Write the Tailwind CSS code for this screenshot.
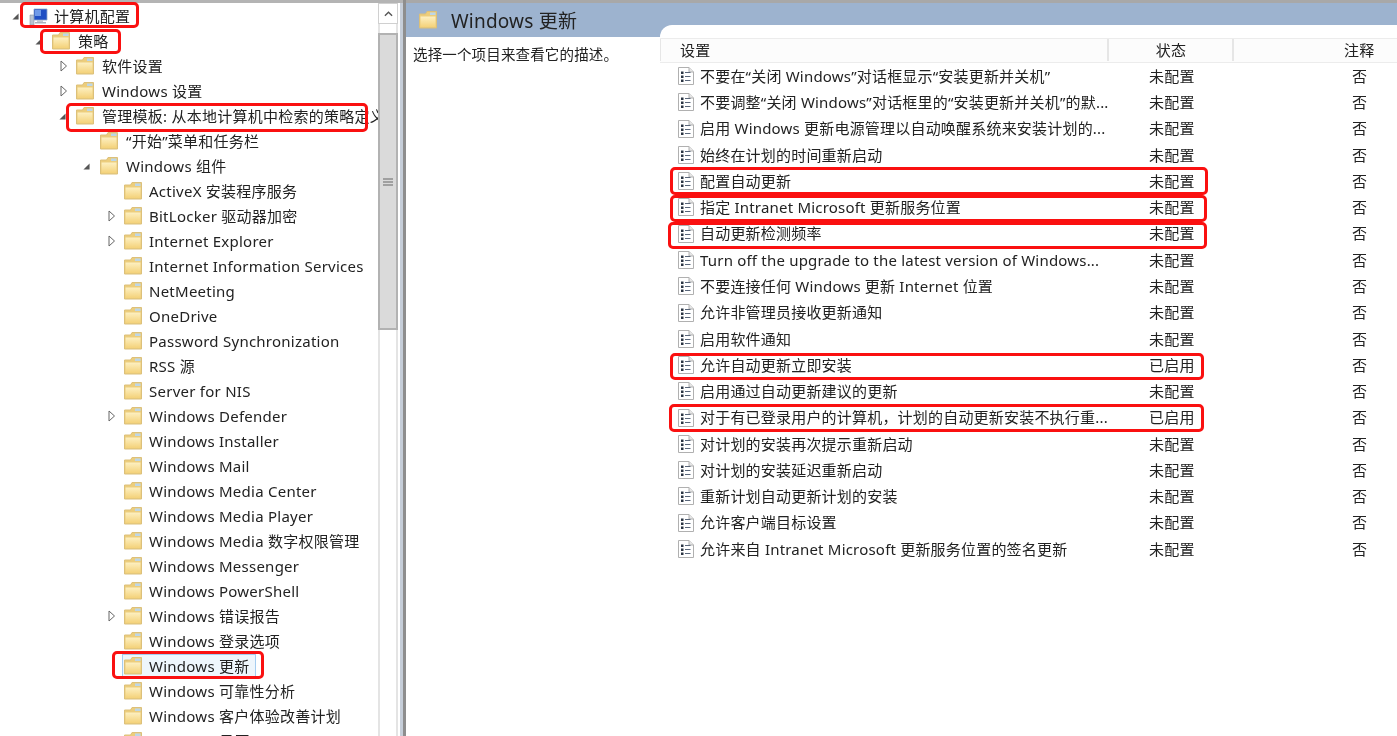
<!DOCTYPE html>
<html lang="zh-CN">
<head>
<meta charset="utf-8">
<script src="https://cdn.jsdelivr.net/npm/@tailwindcss/browser@4"></script>
<title>本地组策略编辑器</title>
</head>
<body class="m-0 bg-white">
<svg width="0" height="0" class="absolute">
  <defs>
    <linearGradient id="fg" x1="0" y1="0" x2="0" y2="1"><stop offset="0" stop-color="#fdf0c2"/><stop offset="1" stop-color="#f4d27a"/></linearGradient>
    <symbol id="folder" viewBox="0 0 18 18">
      <path d="M.5 17V3h6l1.500-2.500h9.500V17z" fill="#eccd7c" stroke="#dcc07a" stroke-width="1"/>
      <path d="M1.500 16V5.500h15V16z" fill="url(#fg)"/>
      <path d="M11 1.500h5.500v2.500H11z" fill="#bcd6e8"/>
    </symbol>
    <symbol id="doc" viewBox="0 0 16 18">
      <path d="M.5.500h10.500l4.500 4.500v12.500H.5z" fill="#fff" stroke="#b0b0b0"/>
      <path d="M11 .5v4.500h4.500" fill="#e6e6e6" stroke="#b0b0b0"/>
      <path d="M3 4.500h2.500v2.500H3zM3 8.500h2.500V11H3zM3 12.500h2.500V15H3z" fill="#2a3442"/>
      <path d="M7 5.500h5.500M7 9.500h5.500M7 13.500h5.500" stroke="#59667a"/>
    </symbol>
    <symbol id="open" viewBox="0 0 8 8"><path d="M7.500.5v7H.5z" fill="#555"/></symbol>
    <symbol id="closed" viewBox="0 0 8 12"><path d="M1 1l5.500 5L1 11z" fill="#fff" stroke="#666"/></symbol>
  </defs>
</svg>
<div class="relative w-[1397px] h-[736px] overflow-hidden flex bg-white text-[#222] blur-[0.35px] font-['Noto_Sans','Noto_Sans_CJK_SC',sans-serif]">
  <!-- left tree -->
  <div class="w-[400px] h-full flex border-t-[3px] border-[#b4b4b4] shrink-0">
    <div class="w-[378px] pt-[0.5px] overflow-hidden text-[15px] tracking-[0.25px] leading-[25px] whitespace-nowrap [&_svg]:shrink-0">
      <div class="h-[25px] flex items-center pl-[12px]"><svg class="w-[7px] h-[7px] mr-[9px]"><use href="#open"/></svg>
        <svg viewBox="0 0 20 20" class="w-[20px] h-[20px] mr-[6px]"><path d="M2 9h4v10H2z" fill="#b8c4d2" stroke="#8b97a6" stroke-width=".6"/><path d="M6 3h13v11H6z" fill="#1f4fc4" stroke="#8fa8cc" stroke-width=".8"/><path d="M7 4h6v6H7z" fill="#6f9ae8"/><path d="M9 14h6v2H9z" fill="#c2cad4"/><path d="M7 16h11v1.500H7z" fill="#a9b3bf"/></svg>计算机配置</div>
      <div class="h-[25px] flex items-center pl-[35px]"><svg class="w-[7px] h-[7px] mr-[10px]"><use href="#open"/></svg><svg class="w-[18px] h-[18px] mr-[8px]"><use href="#folder"/></svg>策略</div>
      <div class="h-[25px] flex items-center pl-[60px]"><svg class="w-[8px] h-[12px] mr-[8px]"><use href="#closed"/></svg><svg class="w-[18px] h-[18px] mr-[8px]"><use href="#folder"/></svg>软件设置</div>
      <div class="h-[25px] flex items-center pl-[60px]"><svg class="w-[8px] h-[12px] mr-[8px]"><use href="#closed"/></svg><svg class="w-[18px] h-[18px] mr-[8px]"><use href="#folder"/></svg>Windows 设置</div>
      <div class="h-[25px] flex items-center pl-[59px]"><svg class="w-[7px] h-[7px] mr-[10px]"><use href="#open"/></svg><svg class="w-[18px] h-[18px] mr-[8px]"><use href="#folder"/></svg>管理模板: 从本地计算机中检索的策略定义</div>
      <div class="h-[25px] flex items-center pl-[100px]"><svg class="w-[18px] h-[18px] mr-[8px]"><use href="#folder"/></svg>“开始”菜单和任务栏</div>
      <div class="h-[25px] flex items-center pl-[83px]"><svg class="w-[7px] h-[7px] mr-[10px]"><use href="#open"/></svg><svg class="w-[18px] h-[18px] mr-[8px]"><use href="#folder"/></svg>Windows 组件</div>
      <div class="h-[25px] flex items-center pl-[124px]"><svg class="w-[18px] h-[18px] mr-[7px]"><use href="#folder"/></svg>ActiveX 安装程序服务</div>
      <div class="h-[25px] flex items-center pl-[108px]"><svg class="w-[8px] h-[12px] mr-[8px]"><use href="#closed"/></svg><svg class="w-[18px] h-[18px] mr-[7px]"><use href="#folder"/></svg>BitLocker 驱动器加密</div>
      <div class="h-[25px] flex items-center pl-[108px]"><svg class="w-[8px] h-[12px] mr-[8px]"><use href="#closed"/></svg><svg class="w-[18px] h-[18px] mr-[7px]"><use href="#folder"/></svg>Internet Explorer</div>
      <div class="h-[25px] flex items-center pl-[124px]"><svg class="w-[18px] h-[18px] mr-[7px]"><use href="#folder"/></svg>Internet Information Services</div>
      <div class="h-[25px] flex items-center pl-[124px]"><svg class="w-[18px] h-[18px] mr-[7px]"><use href="#folder"/></svg>NetMeeting</div>
      <div class="h-[25px] flex items-center pl-[124px]"><svg class="w-[18px] h-[18px] mr-[7px]"><use href="#folder"/></svg>OneDrive</div>
      <div class="h-[25px] flex items-center pl-[124px]"><svg class="w-[18px] h-[18px] mr-[7px]"><use href="#folder"/></svg>Password Synchronization</div>
      <div class="h-[25px] flex items-center pl-[124px]"><svg class="w-[18px] h-[18px] mr-[7px]"><use href="#folder"/></svg>RSS 源</div>
      <div class="h-[25px] flex items-center pl-[124px]"><svg class="w-[18px] h-[18px] mr-[7px]"><use href="#folder"/></svg>Server for NIS</div>
      <div class="h-[25px] flex items-center pl-[108px]"><svg class="w-[8px] h-[12px] mr-[8px]"><use href="#closed"/></svg><svg class="w-[18px] h-[18px] mr-[7px]"><use href="#folder"/></svg>Windows Defender</div>
      <div class="h-[25px] flex items-center pl-[124px]"><svg class="w-[18px] h-[18px] mr-[7px]"><use href="#folder"/></svg>Windows Installer</div>
      <div class="h-[25px] flex items-center pl-[124px]"><svg class="w-[18px] h-[18px] mr-[7px]"><use href="#folder"/></svg>Windows Mail</div>
      <div class="h-[25px] flex items-center pl-[124px]"><svg class="w-[18px] h-[18px] mr-[7px]"><use href="#folder"/></svg>Windows Media Center</div>
      <div class="h-[25px] flex items-center pl-[124px]"><svg class="w-[18px] h-[18px] mr-[7px]"><use href="#folder"/></svg>Windows Media Player</div>
      <div class="h-[25px] flex items-center pl-[124px]"><svg class="w-[18px] h-[18px] mr-[7px]"><use href="#folder"/></svg>Windows Media 数字权限管理</div>
      <div class="h-[25px] flex items-center pl-[124px]"><svg class="w-[18px] h-[18px] mr-[7px]"><use href="#folder"/></svg>Windows Messenger</div>
      <div class="h-[25px] flex items-center pl-[124px]"><svg class="w-[18px] h-[18px] mr-[7px]"><use href="#folder"/></svg>Windows PowerShell</div>
      <div class="h-[25px] flex items-center pl-[108px]"><svg class="w-[8px] h-[12px] mr-[8px]"><use href="#closed"/></svg><svg class="w-[18px] h-[18px] mr-[7px]"><use href="#folder"/></svg>Windows 错误报告</div>
      <div class="h-[25px] flex items-center pl-[124px]"><svg class="w-[18px] h-[18px] mr-[7px]"><use href="#folder"/></svg>Windows 登录选项</div>
      <div class="h-[25px] flex items-center pl-[122px]"><span class="border border-[#a5cdf0] bg-[#eef6fc] pl-[1px] pr-[6px] h-[24px] flex items-center"><svg class="w-[18px] h-[18px] mr-[7px]"><use href="#folder"/></svg>Windows 更新</span></div>
      <div class="h-[25px] flex items-center pl-[124px]"><svg class="w-[18px] h-[18px] mr-[7px]"><use href="#folder"/></svg>Windows 可靠性分析</div>
      <div class="h-[25px] flex items-center pl-[124px]"><svg class="w-[18px] h-[18px] mr-[7px]"><use href="#folder"/></svg>Windows 客户体验改善计划</div>
      <div class="h-[25px] flex items-center pl-[124px]"><svg class="w-[18px] h-[18px] mr-[7px]"><use href="#folder"/></svg>Windows 日历</div>
    </div>
    <!-- scrollbar -->
    <div class="w-[20px] h-full flex flex-col border-x-2 border-[#e4e4e4]">
      <div class="h-[21px] bg-white border border-[#d0d0d0] -mx-[2px] flex items-center justify-center shrink-0">
        <svg viewBox="0 0 10 6" class="w-[9px] h-[6px]"><path d="M1 5l4-4 4 4" fill="none" stroke="#555" stroke-width="1.500"/></svg>
      </div>
      <div class="h-[9px] bg-white shrink-0"></div>
      <div class="h-[297px] bg-[#dadada] border-2 border-[#b2b2b2] -mx-[2px] flex items-center justify-center shrink-0">
        <svg viewBox="0 0 10 8" class="w-[10px] h-[8px]"><path d="M0 1h10M0 4h10M0 7h10" stroke="#666"/></svg>
      </div>
    </div>
  </div>
  <!-- splitter -->
  <div class="w-[3px] h-full bg-[#c6ced9] shrink-0 border-t-[3px] border-[#b4b4b4]"></div>
  <div class="w-[3px] h-full bg-[#8e8e8e] shrink-0"></div>
  <!-- right pane -->
  <div class="flex-1 min-w-0 h-full flex flex-col border-t-[3px] border-[#a8a8a8]">
    <div class="h-[34px] bg-[#9db3cf] flex items-center pl-[13px] shrink-0">
      <svg class="w-[18px] h-[18px] mr-[14px]"><use href="#folder"/></svg>
      <span class="text-[19px] tracking-[0.2px] mt-[3px]">Windows 更新</span>
    </div>
    <div class="flex flex-1 min-h-0">
      <div class="w-[254px] shrink-0 pl-[7px] pt-[6px] text-[14.500px] tracking-[0.15px] leading-[22px]">选择一个项目来查看它的描述。</div>
      <div class="relative flex-1 min-w-0 bg-white -mt-[12px] rounded-tl-[12px] text-[15px] tracking-[0.2px] whitespace-nowrap">
        <div class="h-[13px]"></div>
        <div class="h-[25px] pb-[1px] flex text-[#222] border-y border-[#ececec] bg-[#fcfcfc]">
          <div class="w-[449px] pl-[19px] flex items-center border-r-[2px] border-[#e6e6e6] border-l-[1px]">设置</div>
          <div class="w-[125px] pl-[1px] flex items-center justify-center border-r-[2px] border-[#e6e6e6]">状态</div>
          <div class="flex-1 flex items-center pl-[110px]">注释</div>
        </div>
        <div class="[&>div]:h-[26.280px]">
          <div class="flex items-center pl-[18px]"><svg class="w-[16px] h-[18px] mr-[6px] shrink-0"><use href="#doc"/></svg><span class="w-[449px]">不要在“关闭 Windows”对话框显示“安装更新并关机”</span><span class="w-[203px]">未配置</span><span>否</span></div>
          <div class="flex items-center pl-[18px]"><svg class="w-[16px] h-[18px] mr-[6px] shrink-0"><use href="#doc"/></svg><span class="w-[449px]">不要调整“关闭 Windows”对话框里的“安装更新并关机”的默...</span><span class="w-[203px]">未配置</span><span>否</span></div>
          <div class="flex items-center pl-[18px]"><svg class="w-[16px] h-[18px] mr-[6px] shrink-0"><use href="#doc"/></svg><span class="w-[449px]">启用 Windows 更新电源管理以自动唤醒系统来安装计划的...</span><span class="w-[203px]">未配置</span><span>否</span></div>
          <div class="flex items-center pl-[18px]"><svg class="w-[16px] h-[18px] mr-[6px] shrink-0"><use href="#doc"/></svg><span class="w-[449px]">始终在计划的时间重新启动</span><span class="w-[203px]">未配置</span><span>否</span></div>
          <div class="flex items-center pl-[18px]"><svg class="w-[16px] h-[18px] mr-[6px] shrink-0"><use href="#doc"/></svg><span class="w-[449px]">配置自动更新</span><span class="w-[203px]">未配置</span><span>否</span></div>
          <div class="flex items-center pl-[18px]"><svg class="w-[16px] h-[18px] mr-[6px] shrink-0"><use href="#doc"/></svg><span class="w-[449px]">指定 Intranet Microsoft 更新服务位置</span><span class="w-[203px]">未配置</span><span>否</span></div>
          <div class="flex items-center pl-[18px]"><svg class="w-[16px] h-[18px] mr-[6px] shrink-0"><use href="#doc"/></svg><span class="w-[449px]">自动更新检测频率</span><span class="w-[203px]">未配置</span><span>否</span></div>
          <div class="flex items-center pl-[18px]"><svg class="w-[16px] h-[18px] mr-[6px] shrink-0"><use href="#doc"/></svg><span class="w-[449px]">Turn off the upgrade to the latest version of Windows...</span><span class="w-[203px]">未配置</span><span>否</span></div>
          <div class="flex items-center pl-[18px]"><svg class="w-[16px] h-[18px] mr-[6px] shrink-0"><use href="#doc"/></svg><span class="w-[449px]">不要连接任何 Windows 更新 Internet 位置</span><span class="w-[203px]">未配置</span><span>否</span></div>
          <div class="flex items-center pl-[18px]"><svg class="w-[16px] h-[18px] mr-[6px] shrink-0"><use href="#doc"/></svg><span class="w-[449px]">允许非管理员接收更新通知</span><span class="w-[203px]">未配置</span><span>否</span></div>
          <div class="flex items-center pl-[18px]"><svg class="w-[16px] h-[18px] mr-[6px] shrink-0"><use href="#doc"/></svg><span class="w-[449px]">启用软件通知</span><span class="w-[203px]">未配置</span><span>否</span></div>
          <div class="flex items-center pl-[18px]"><svg class="w-[16px] h-[18px] mr-[6px] shrink-0"><use href="#doc"/></svg><span class="w-[449px]">允许自动更新立即安装</span><span class="w-[203px]">已启用</span><span>否</span></div>
          <div class="flex items-center pl-[18px]"><svg class="w-[16px] h-[18px] mr-[6px] shrink-0"><use href="#doc"/></svg><span class="w-[449px]">启用通过自动更新建议的更新</span><span class="w-[203px]">未配置</span><span>否</span></div>
          <div class="flex items-center pl-[18px]"><svg class="w-[16px] h-[18px] mr-[6px] shrink-0"><use href="#doc"/></svg><span class="w-[449px]">对于有已登录用户的计算机，计划的自动更新安装不执行重...</span><span class="w-[203px]">已启用</span><span>否</span></div>
          <div class="flex items-center pl-[18px]"><svg class="w-[16px] h-[18px] mr-[6px] shrink-0"><use href="#doc"/></svg><span class="w-[449px]">对计划的安装再次提示重新启动</span><span class="w-[203px]">未配置</span><span>否</span></div>
          <div class="flex items-center pl-[18px]"><svg class="w-[16px] h-[18px] mr-[6px] shrink-0"><use href="#doc"/></svg><span class="w-[449px]">对计划的安装延迟重新启动</span><span class="w-[203px]">未配置</span><span>否</span></div>
          <div class="flex items-center pl-[18px]"><svg class="w-[16px] h-[18px] mr-[6px] shrink-0"><use href="#doc"/></svg><span class="w-[449px]">重新计划自动更新计划的安装</span><span class="w-[203px]">未配置</span><span>否</span></div>
          <div class="flex items-center pl-[18px]"><svg class="w-[16px] h-[18px] mr-[6px] shrink-0"><use href="#doc"/></svg><span class="w-[449px]">允许客户端目标设置</span><span class="w-[203px]">未配置</span><span>否</span></div>
          <div class="flex items-center pl-[18px]"><svg class="w-[16px] h-[18px] mr-[6px] shrink-0"><use href="#doc"/></svg><span class="w-[449px]">允许来自 Intranet Microsoft 更新服务位置的签名更新</span><span class="w-[203px]">未配置</span><span>否</span></div>
        </div>
      </div>
    </div>
  </div>
  <!-- red annotation boxes -->
  <div class="absolute left-[20px] top-[2px] w-[119px] h-[26px] border-[3.500px] border-[#fa1010] rounded-[5px]"></div>
  <div class="absolute left-[40px] top-[29px] w-[81px] h-[25px] border-[3.500px] border-[#fa1010] rounded-[5px]"></div>
  <div class="absolute left-[66px] top-[103px] w-[302px] h-[29px] border-[3.500px] border-[#fa1010] rounded-[5px]"></div>
  <div class="absolute left-[112px] top-[651px] w-[152px] h-[28px] border-[3.500px] border-[#fa1010] rounded-[5px]"></div>
  <div class="absolute left-[670px] top-[167px] w-[538px] h-[28px] border-[3.500px] border-[#fa1010] rounded-[5px]"></div>
  <div class="absolute left-[670px] top-[195px] w-[537px] h-[27px] border-[3.500px] border-[#fa1010] rounded-[5px]"></div>
  <div class="absolute left-[668px] top-[222px] w-[539px] h-[27px] border-[3.500px] border-[#fa1010] rounded-[5px]"></div>
  <div class="absolute left-[670px] top-[353px] w-[534px] h-[27px] border-[3.500px] border-[#fa1010] rounded-[5px]"></div>
  <div class="absolute left-[669px] top-[404px] w-[535px] h-[28px] border-[3.500px] border-[#fa1010] rounded-[5px]"></div>
</div>
</body>
</html>
